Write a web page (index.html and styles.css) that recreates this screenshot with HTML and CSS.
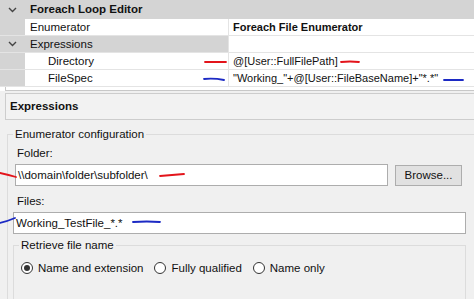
FILE: index.html
```html
<!DOCTYPE html>
<html lang="en">

<head>
    <meta charset="UTF-8">
    <title>Foreach Loop Editor</title>
    <link rel="stylesheet" href="styles.css">
</head>

<body>
    <div class="prop-grid">
        <div class="row cat full">
            <span class="gutter"><svg class="chev" width="9" height="6" viewBox="0 0 9 6"><polyline points="1,1 4.5,4.5 8,1" /></svg></span>
            <span class="name">Foreach Loop Editor</span>
        </div>
        <div class="row prop">
            <span class="gutter"></span>
            <span class="name">Enumerator</span>
            <span class="val bold">Foreach File Enumerator</span>
        </div>
        <div class="row cat">
            <span class="gutter"><svg class="chev" width="9" height="6" viewBox="0 0 9 6"><polyline points="1,1 4.5,4.5 8,1" /></svg></span>
            <span class="name">Expressions</span>
            <span class="val"></span>
        </div>
        <div class="row prop sub">
            <span class="gutter"></span>
            <span class="name">Directory</span>
            <span class="val">@[User::FullFilePath]</span>
        </div>
        <div class="row prop sub">
            <span class="gutter"></span>
            <span class="name">FileSpec</span>
            <span class="val">"Working_"+@[User::FileBaseName]+"*.*"</span>
        </div>
        <div class="grid-end"></div>
    </div>

    <div class="panel">
        <div class="panel-head">Expressions</div>

        <div class="group">
            <div class="group-title">Enumerator configuration</div>
            <div class="group-body">
                <div class="field-label">Folder:</div>
                <div class="folder-row">
                    <div class="text-box">\\domain\folder\subfolder\</div>
                    <div class="btn">Browse...</div>
                </div>
                <div class="field-label">Files:</div>
                <div class="text-box files">Working_TestFile_*.*</div>

                <div class="group inner">
                    <div class="group-title">Retrieve file name</div>
                    <div class="radio-row">
                        <span class="radio checked"></span><span class="radio-label">Name and extension</span>
                        <span class="radio"></span><span class="radio-label">Fully qualified</span>
                        <span class="radio"></span><span class="radio-label">Name only</span>
                    </div>
                </div>
            </div>
        </div>
    </div>

    <!-- hand drawn marks -->
    <svg class="marks" width="474" height="299" viewBox="0 0 474 299">
        <path class="red" d="M205 62 L226 62" />
        <path class="red" d="M341 62 Q350 61 359 62" />
        <path class="blue" d="M204 79 Q214 78 224 80" />
        <path class="blue" d="M444 80 L463 80" />
        <path class="red" d="M0 173 Q9 175 16 177" />
        <path class="red" d="M160 176 Q172 175 184 174" />
        <path class="blue" d="M0 223 Q8 221 15 218" />
        <path class="blue" d="M133 222 Q147 221 160 222" />
    </svg>
</body>

</html>
```

FILE: styles.css
```css
:root {
    --gutter: #d4d4d4;
    --line: #e4e4e4;
    --face: #f0f0f0;
    --text: #111;
    --box-border: #adadad;
}

* {
    margin: 0;
    padding: 0;
    box-sizing: border-box;
}

body {
    width: 474px;
    height: 299px;
    overflow: hidden;
    position: relative;
    background: var(--face);
    color: var(--text);
    font-family: 'Liberation Sans', Arial, sans-serif;
    font-size: 11.5px;
}

/* property grid */
.prop-grid {
    background: white;
}

.row {
    display: flex;
    height: 17px;
    line-height: 16px;
    border-bottom: 1px solid var(--line);
}

.row.full {
    height: 19px;
    line-height: 18px;
    background: var(--gutter);
    border-bottom: none;
}

.gutter {
    width: 25px;
    flex: none;
    background: var(--gutter);
    display: flex;
    align-items: center;
    justify-content: center;
}

.chev {
    fill: none;
    stroke: #444;
    stroke-width: 1.4;
}

.name {
    width: 204px;
    flex: none;
    padding-left: 5px;
    border-right: 1px solid var(--line);
}

.row.full .name {
    border-right: none;
    font-weight: bold;
}

.row.cat .name {
    background: var(--gutter);
}

.row.sub .name {
    padding-left: 23px;
}

.val {
    flex: 1;
    padding-left: 4px;
    font-size: 11px;
    white-space: nowrap;
}

.bold {
    font-weight: bold;
}

.grid-end {
    height: 4px;
    margin-left: 5px;
    border-left: 1px solid #c8c8c8;
    border-bottom: 1px solid #c8c8c8;
}

/* lower panel */
.panel {
    padding-left: 5px;
}

.panel-head {
    margin-top: 2px;
    height: 27px;
    line-height: 25px;
    padding-left: 4px;
    font-weight: bold;
    background: #f2f2f2;
    border: 1px solid #cdcdcd;
    border-right: none;
}

.group {
    position: relative;
    margin-top: 14px;
    margin-left: 2px;
    border: 1px solid #dcdcdc;
    border-right: none;
    border-bottom: none;
    padding: 11px 0 0 7px;
}

.group-title {
    position: absolute;
    top: -8px;
    left: 5px;
    padding: 0 2px;
    background: var(--face);
    line-height: 15px;
}

.field-label {
    padding-left: 2px;
    line-height: 14px;
    margin-bottom: 4px;
}

.folder-row {
    display: flex;
    gap: 7px;
    margin-bottom: 8px;
}

.text-box {
    height: 22px;
    line-height: 20px;
    padding-left: 2px;
    background: white;
    border: 1px solid var(--box-border);
    white-space: nowrap;
}

.folder-row .text-box {
    width: 373px;
}

.text-box.files {
    width: 453px;
    margin-left: -2px;
    margin-top: 2px;
}

.btn {
    width: 67px;
    height: 21px;
    margin-top: 1px;
    line-height: 19px;
    text-align: center;
    background: #e1e1e1;
    border: 1px solid #adadad;
}

.group.inner {
    width: 453px;
    margin-left: -2px;
    margin-top: 11px;
    height: 60px;
    border-right: 1px solid #dcdcdc;
    padding: 16px 0 0 7px;
}

.radio-row {
    display: flex;
    align-items: center;
}

.radio {
    width: 12px;
    height: 12px;
    border-radius: 50%;
    border: 1px solid #333;
    background: white;
    margin-right: 5px;
    position: relative;
    flex: none;
}

.radio.checked::after {
    content: "";
    position: absolute;
    left: 2px;
    top: 2px;
    width: 6px;
    height: 6px;
    border-radius: 50%;
    background: #333;
}

.radio-label {
    margin-right: 11px;
}

/* annotations on top */
.marks {
    position: absolute;
    left: 0;
    top: 0;
    pointer-events: none;
}

.marks path {
    fill: none;
    stroke-width: 1.8;
    stroke-linecap: round;
}

.marks .red {
    stroke: #e3141b;
}

.marks .blue {
    stroke: #1c2ac4;
}
```
